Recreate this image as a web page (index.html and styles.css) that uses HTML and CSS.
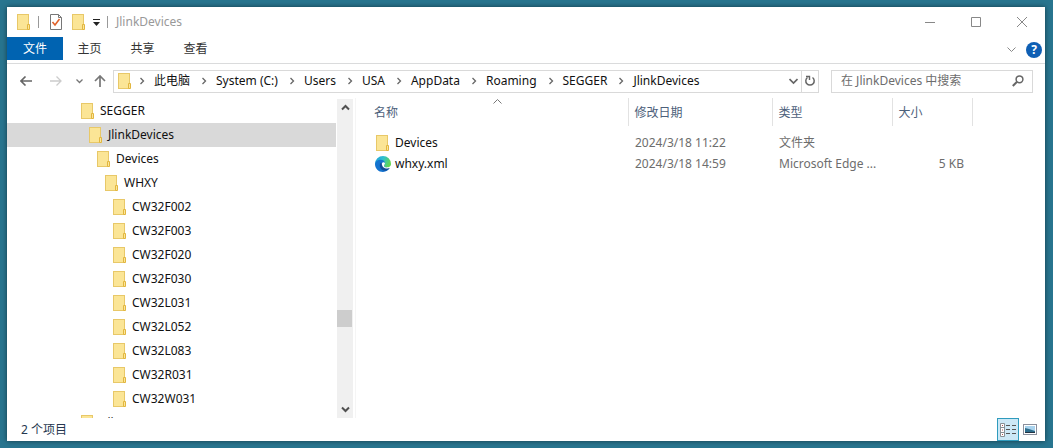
FILE: index.html
```html
<!DOCTYPE html>
<html lang="zh-CN">
<head>
  <meta charset="UTF-8">
  <meta name="viewport" content="width=device-width, initial-scale=1.0">
  <title>JlinkDevices</title>
  <link rel="stylesheet" href="styles.css">
</head>
<body>

<svg class="sprite" aria-hidden="true">
  <symbol id="folder" viewBox="0 0 14 16">
    <rect x="0.5" y="0.5" width="11" height="15" fill="#fbe596" stroke="#e8c868" />
    <path d="M10.500 15.500v-5h2v5z" fill="#fbe69a" stroke="#e2b63f" />
  </symbol>
  <symbol id="chevron" viewBox="0 0 6 8">
    <path d="M1.500 1l3 3-3 3" fill="none" stroke="#666" stroke-width="1.300" />
  </symbol>
</svg>

<div class="window">
  <header class="titlebar">
    <svg class="folder"><use href="#folder" /></svg>
    <span class="divider"></span>
    <button class="quick" aria-label="属性">
      <svg width="12" height="16" viewBox="0 0 12 16">
        <path d="M0.500 0.500h8l3 3v12h-11z" fill="#fff" stroke="#777" />
        <path d="M8.500 0.500v3h3" fill="none" stroke="#777" />
        <path d="M2.500 8l2.500 3 4.500-6" fill="none" stroke="#e0622a" stroke-width="1.600" />
      </svg>
    </button>
    <button class="quick" aria-label="新建文件夹"><svg class="folder"><use href="#folder" /></svg></button>
    <button class="quick customize" aria-label="自定义快速访问工具栏">
      <svg width="7" height="7" viewBox="0 0 7 7"><path d="M0 0h7v1H0zM0 3h7L3.500 7z" fill="#222" /></svg>
    </button>
    <span class="divider"></span>
    <h1>JlinkDevices</h1>
    <div class="controls">
      <button aria-label="最小化"><svg width="10" height="10"><path d="M0 5.500h10" /></svg></button>
      <button aria-label="最大化"><svg width="10" height="10"><path d="M0.500 0.500h9v9h-9z" /></svg></button>
      <button aria-label="关闭"><svg width="10" height="10"><path d="M0 0l10 10M10 0L0 10" /></svg></button>
    </div>
  </header>

  <nav class="ribbon">
    <button class="tab tab-file">文件</button>
    <button class="tab">主页</button>
    <button class="tab">共享</button>
    <button class="tab">查看</button>
    <button class="expand" aria-label="展开功能区">
      <svg width="9" height="6"><path d="M0.500 0.500l4 4 4-4" fill="none" stroke="#888" /></svg>
    </button>
    <button class="help" aria-label="帮助">?</button>
  </nav>

  <div class="navbar">
    <button class="back" aria-label="后退">
      <svg width="12" height="10"><path d="M12 5H1M5.500 0.500L1 5l4.500 4.500" fill="none" stroke="#666" stroke-width="1.600" /></svg>
    </button>
    <button class="forward" aria-label="前进" disabled>
      <svg width="12" height="10"><path d="M0 5h11M6.500 0.500L11 5l-4.500 4.500" fill="none" stroke="#ccc" stroke-width="1.300" /></svg>
    </button>
    <button class="recent" aria-label="最近浏览的位置">
      <svg width="7" height="5"><path d="M0.500 0.500l3 3 3-3" fill="none" stroke="#777" stroke-width="1.300" /></svg>
    </button>
    <button class="up" aria-label="上移">
      <svg width="12" height="12"><path d="M6 12V1M1 6l5-5 5 5" fill="none" stroke="#777" stroke-width="1.700" /></svg>
    </button>
    <div class="address">
      <svg class="folder"><use href="#folder" /></svg>
      <ol class="crumbs">
        <li><svg class="chevron"><use href="#chevron" /></svg><a href="#">此电脑</a></li>
        <li><svg class="chevron"><use href="#chevron" /></svg><a href="#">System (C:)</a></li>
        <li><svg class="chevron"><use href="#chevron" /></svg><a href="#">Users</a></li>
        <li><svg class="chevron"><use href="#chevron" /></svg><a href="#">USA</a></li>
        <li><svg class="chevron"><use href="#chevron" /></svg><a href="#">AppData</a></li>
        <li><svg class="chevron"><use href="#chevron" /></svg><a href="#">Roaming</a></li>
        <li><svg class="chevron"><use href="#chevron" /></svg><a href="#">SEGGER</a></li>
        <li><svg class="chevron"><use href="#chevron" /></svg><a href="#">JlinkDevices</a></li>
      </ol>
      <button class="history" aria-label="历史记录">
        <svg width="9" height="7"><path d="M0.500 1l4 4 4-4" fill="none" stroke="#666" stroke-width="1.700" /></svg>
      </button>
      <button class="refresh" aria-label="刷新">
        <svg width="12" height="12" viewBox="0 0 12 12">
          <path d="M8.500 2.500a4.200 4.200 0 1 1-5 0" fill="none" stroke="#666" stroke-width="1.500" />
          <path d="M2 1.500h3.500V5" fill="none" stroke="#666" stroke-width="1.400" />
        </svg>
      </button>
    </div>
    <div class="search">
      <input type="search" aria-label="搜索" placeholder="在 JlinkDevices 中搜索">
      <svg width="12" height="12" viewBox="0 0 12 12">
        <circle cx="7.500" cy="4.300" r="3.400" fill="none" stroke="#666" stroke-width="1.500" />
        <path d="M5 6.800L0.800 11" stroke="#666" stroke-width="2" />
      </svg>
    </div>
  </div>

  <main class="content">
    <ul class="tree">
      <li class="level-1"><svg class="folder"><use href="#folder" /></svg>SEGGER</li>
      <li class="level-2 selected"><svg class="folder"><use href="#folder" /></svg>JlinkDevices</li>
      <li class="level-3"><svg class="folder"><use href="#folder" /></svg>Devices</li>
      <li class="level-4"><svg class="folder"><use href="#folder" /></svg>WHXY</li>
      <li class="level-5"><svg class="folder"><use href="#folder" /></svg>CW32F002</li>
      <li class="level-5"><svg class="folder"><use href="#folder" /></svg>CW32F003</li>
      <li class="level-5"><svg class="folder"><use href="#folder" /></svg>CW32F020</li>
      <li class="level-5"><svg class="folder"><use href="#folder" /></svg>CW32F030</li>
      <li class="level-5"><svg class="folder"><use href="#folder" /></svg>CW32L031</li>
      <li class="level-5"><svg class="folder"><use href="#folder" /></svg>CW32L052</li>
      <li class="level-5"><svg class="folder"><use href="#folder" /></svg>CW32L083</li>
      <li class="level-5"><svg class="folder"><use href="#folder" /></svg>CW32R031</li>
      <li class="level-5"><svg class="folder"><use href="#folder" /></svg>CW32W031</li>
      <li class="level-1"><svg class="folder"><use href="#folder" /></svg>nii</li>
    </ul>
    <div class="scrollbar">
      <button aria-label="向上滚动"><svg width="9" height="7"><path d="M1 5.500L4.500 2 8 5.500" fill="none" stroke="#505050" stroke-width="2" /></svg></button>
      <div class="track"><div class="thumb"></div></div>
      <button aria-label="向下滚动"><svg width="9" height="7"><path d="M1 1.500L4.500 5 8 1.500" fill="none" stroke="#505050" stroke-width="2" /></svg></button>
    </div>

    <section class="files">
      <table>
        <thead>
          <tr>
            <th class="col-name">名称
              <svg class="sort" width="9" height="5"><path d="M0.500 4.500l4-4 4 4" fill="none" stroke="#777" /></svg>
            </th>
            <th class="col-date">修改日期</th>
            <th class="col-type">类型</th>
            <th class="col-size">大小</th>
          </tr>
        </thead>
        <tbody>
          <tr>
            <td><div class="file"><svg class="folder"><use href="#folder" /></svg>Devices</div></td>
            <td>2024/3/18 11:22</td>
            <td>文件夹</td>
            <td></td>
          </tr>
          <tr>
            <td>
              <div class="file">
                <svg class="edge" viewBox="0 0 16 16">
                  <defs>
                    <linearGradient id="edge-top" x1="0" y1="0" x2="1" y2="0.400">
                      <stop offset="0" stop-color="#1b9de0" />
                      <stop offset="0.500" stop-color="#2fc0cf" />
                      <stop offset="1" stop-color="#62d64f" />
                    </linearGradient>
                  </defs>
                  <path d="M0 8a8 8 0 0 1 16 0c0 2-1.300 3.200-3.200 3.200L8 13z" fill="url(#edge-top)" />
                  <path d="M0 8C0.500 5 3 3.700 5.500 3.700c3 0 4.500 1.800 4.500 3.500 0 1.300-1 1.600-1 2.600 0 1.200 1.700 2.200 3.800 2.200 1 0 1.800-0.300 2.200-0.400C13.600 14.200 11 16 8 16 3.500 16 0 12.500 0 8z" fill="#1473cf" />
                  <path d="M5.800 6.800C4.600 8 4.500 10 5.300 11.700 6.400 14 9 15 11.500 14.500 13 13.900 14.400 12.700 15 11.600c-1 0.400-1.800 0.500-2.700 0.400C9.800 12 8.500 10.700 8.700 9.300L8 7z" fill="#124b98" />
                  <path d="M6.800 7.500C7.500 6 9.300 6 10 7.200c0 1.200-1 1.600-1 2.500 0 1 1.200 1.700 2.700 1.700 1.800 0 3-0.300 4.300-1.200-0.200 0.800-0.600 1.300-1 1.800-4.300 1.500-8.200-0.500-8.200-4.500z" fill="#fff" />
                </svg>whxy.xml
              </div>
            </td>
            <td>2024/3/18 14:59</td>
            <td>Microsoft Edge ...</td>
            <td class="size">5 KB</td>
          </tr>
        </tbody>
      </table>
    </section>
  </main>

  <footer class="status">
    <span>2 个项目</span>
    <div class="views">
      <button class="view active" aria-label="详细信息">
        <svg width="17" height="14" viewBox="0 0 17 14">
          <path d="M0.500 0.500h4v13h-4zM0.500 4.500h4M0.500 9.500h4" fill="#fff" stroke="#8a9096" />
          <path d="M2 2.500h1M2 7h1M2 11.500h1" stroke="#a55" />
          <path d="M6 2.500h4M12 2.500h4M6 6.500h4M12 6.500h4M6 10.500h4M12 10.500h4" stroke="#555" />
        </svg>
      </button>
      <button class="view" aria-label="大缩略图">
        <svg width="14" height="11" viewBox="0 0 14 11">
          <rect x="0.500" y="0.500" width="13" height="10" fill="#fff" stroke="#8a8f9c" />
          <rect x="2" y="2" width="10" height="7" fill="#a9d3ee" />
          <path d="M2 4l4 1 6 2v2H2z" fill="#2d6d8c" />
          <path d="M2 8h10v1H2z" fill="#234" />
        </svg>
      </button>
    </div>
  </footer>
</div>

</body>
</html>
```

FILE: styles.css
```css
* {
  box-sizing: border-box;
  margin: 0;
  padding: 0;
}

body {
  height: 100vh;
  padding: 7px 8px 7px 7px;
  background: #28758f;
  font-family: "Noto Sans", "Noto Sans CJK SC", sans-serif;
  font-size: 12px;
  line-height: 16px;
  color: #111;
}

button {
  display: flex;
  align-items: center;
  justify-content: center;
  border: none;
  background: none;
  font: inherit;
  color: inherit;
}

ul,
ol {
  list-style: none;
}

svg {
  display: block;
  flex: none;
}

.sprite {
  position: absolute;
  width: 0;
  height: 0;
}

.folder {
  width: 14px;
  height: 16px;
}

.window {
  display: flex;
  flex-direction: column;
  height: 100%;
  background: #fff;
  box-shadow: 0 0 5px rgba(0, 0, 0, 0.5);
}

/* title bar */

.titlebar {
  display: flex;
  align-items: center;
  height: 30px;
  padding-left: 10px;
}

.divider {
  width: 1px;
  height: 12px;
  margin-left: 7px;
  background: #999;
}

.quick {
  margin-left: 11px;
}

.quick + .quick {
  margin-left: 10px;
}

.quick + .customize {
  margin-left: 7px;
}

.titlebar h1 {
  margin-left: 8px;
  font-size: 12px;
  font-weight: 400;
  color: #999;
}

.controls {
  display: flex;
  margin-left: auto;
}

.controls button {
  width: 46px;
  height: 30px;
}

.controls svg {
  fill: none;
  stroke: #888;
}

/* ribbon tabs */

.ribbon {
  display: flex;
  align-items: center;
  height: 27px;
  padding-right: 3px;
  border-bottom: 1px solid #dadbdc;
}

.tab {
  width: 53px;
  height: 23px;
  margin-bottom: 3px;
  color: #333;
}

.tab-file {
  width: 56px;
  background: #0063b1;
  color: #fff;
}

.expand {
  margin-left: auto;
}

.help {
  width: 16px;
  height: 16px;
  margin-left: 10px;
  border-radius: 50%;
  background: #0f5fb4;
  font-weight: 700;
  color: #fff;
}

/* address row */

.navbar {
  display: flex;
  align-items: center;
  height: 34px;
  padding: 0 12px 0 13px;
}

.forward {
  margin-left: 18px;
}

.recent {
  margin-left: 14px;
}

.up {
  margin-left: 11px;
}

.address {
  display: flex;
  flex: 1;
  align-items: center;
  height: 23px;
  margin-left: 7px;
  padding-left: 4px;
  border: 1px solid #d9d9d9;
}

.crumbs {
  display: flex;
  flex: 1;
  gap: 4px;
}

.crumbs li {
  display: flex;
  align-items: center;
}

.chevron {
  width: 6px;
  height: 8px;
  margin: 0 9px 0 7px;
}

.crumbs a {
  color: inherit;
  text-decoration: none;
}

.history {
  margin-right: 3px;
}

.refresh {
  width: 17px;
  height: 21px;
  border-left: 1px solid #d9d9d9;
}

.search {
  display: flex;
  align-items: center;
  width: 202px;
  height: 23px;
  margin-left: 12px;
  padding: 0 8px 0 9px;
  border: 1px solid #d9d9d9;
}

.search input {
  flex: 1;
  min-width: 0;
  border: none;
  outline: none;
  font: inherit;
}

.search input::placeholder {
  color: #6d6d6d;
}

/* tree and file list */

.content {
  display: flex;
  flex: 1;
  min-height: 0;
}

.tree {
  width: 329px;
  padding-top: 1px;
  overflow: hidden;
}

.tree li {
  display: flex;
  align-items: center;
  gap: 5px;
  height: 24px;
}

.tree .selected {
  background: #d9d9d9;
}

.level-1 {
  padding-left: 74px;
}

.level-2 {
  padding-left: 82px;
}

.level-3 {
  padding-left: 90px;
}

.level-4 {
  padding-left: 98px;
}

.level-5 {
  padding-left: 106px;
}

.scrollbar {
  display: flex;
  flex-direction: column;
  width: 16px;
  margin-left: 1px;
  padding-top: 1px;
}

.scrollbar button {
  height: 17px;
  background: #f0f0f0;
}

.track {
  display: flex;
  flex: 1;
  flex-direction: column;
  justify-content: flex-end;
  padding: 0 1px 74px 0;
  background: #f0f0f0;
}

.thumb {
  height: 17px;
  background: #cdcdcd;
}

.files {
  flex: 1;
  margin-left: 2px;
  padding-left: 12px;
  border-left: 1px solid #f5f5f5;
}

table {
  table-layout: fixed;
  border-collapse: collapse;
}

th {
  position: relative;
  height: 28px;
  padding: 2px 0 0 6px;
  border-right: 1px solid #e2e2e2;
  font-weight: 400;
  text-align: left;
  color: #4c607a;
}

.sort {
  position: absolute;
  top: 1px;
  left: 48%;
}

.col-name {
  width: 260px;
}

.col-date {
  width: 144px;
}

.col-type {
  width: 120px;
}

.col-size {
  width: 80px;
}

tbody::before {
  content: "";
  display: block;
  height: 6px;
}

td {
  height: 21px;
  padding-left: 7px;
  white-space: nowrap;
  color: #6d6d6d;
}

td.size {
  padding-right: 8px;
  text-align: right;
}

.file {
  display: flex;
  align-items: center;
  gap: 4px;
  color: #111;
}

.file .folder {
  width: 16px;
}

.edge {
  width: 16px;
  height: 16px;
}

/* status bar */

.status {
  display: flex;
  align-items: center;
  justify-content: space-between;
  height: 23px;
  padding: 0 4px 0 14px;
  color: #26374f;
}

.views {
  display: flex;
}

.view {
  width: 22px;
  height: 23px;
}

.view.active {
  border: 1px solid #2f9bbd;
  background: #cce8f6;
}
```
